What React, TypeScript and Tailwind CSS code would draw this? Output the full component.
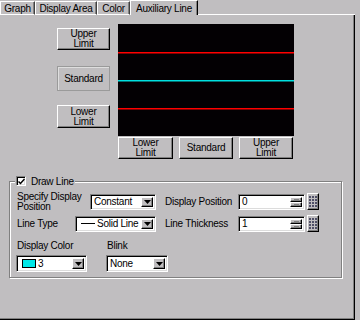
import React from "react";

const raised =
  "bg-[#c0bec0] border border-t-white border-l-white border-r-black border-b-black shadow-[inset_-1px_-1px_0_#808080]";
const sunken =
  "bg-white border border-t-[#808080] border-l-[#808080] border-r-white border-b-white shadow-[inset_1px_1px_0_#000,inset_-1px_-1px_0_#dcdcdc]";

function Btn({ w, h, children }: { w: string; h: string; children: React.ReactNode }) {
  return (
    <div className={`${raised} ${w} ${h} flex flex-col items-center justify-center leading-[10px] text-center`}>
      {children}
    </div>
  );
}

function Arrow() {
  return (
    <div className={`${raised} w-[12px] h-full flex items-center justify-center`}>
      <svg width="7" height="4" viewBox="0 0 7 4">
        <path d="M0 0h7L3.5 4z" fill="#000" />
      </svg>
    </div>
  );
}

function Select({ w, h, children }: { w: string; h: string; children: React.ReactNode }) {
  return (
    <div className={`${sunken} ${w} ${h} flex items-stretch p-[2px]`}>
      <div className="flex-1 flex items-center pl-[1px] overflow-hidden whitespace-nowrap">{children}</div>
      <Arrow />
    </div>
  );
}

function Spin() {
  return (
    <div className={`${raised} flex-1 flex items-center justify-center`}>
      <div className="w-[5px] h-[1px] bg-[#808080]" />
    </div>
  );
}

function NumInput({ value }: { value: string }) {
  return (
    <div className="flex items-center">
      <div className={`${sunken} w-[67px] h-[16px] flex items-stretch p-[2px]`}>
        <div className="flex-1 flex items-center pl-[1px]">{value}</div>
        <div className="w-[12px] flex flex-col">
          <Spin />
          <Spin />
        </div>
      </div>
      <div className={`${raised} ml-[2px] w-[12px] h-[17px] flex items-center justify-center`}>
        <svg width="8" height="11" viewBox="0 0 8 11">
          {[0, 1, 2, 3].map((r) =>
            [0, 1, 2].map((c) => (
              <rect key={`${r}-${c}`} x={c * 3} y={r * 3} width="2" height="2" fill="#505068" />
            ))
          )}
        </svg>
      </div>
    </div>
  );
}

function Tab({ w, label }: { w: string; label: string }) {
  return (
    <div
      className={`${w} h-[14px] flex items-center justify-center border border-t-white border-l-white border-b-white border-r-[#404040] shadow-[inset_-1px_0_0_#808080]`}
    >
      {label}
    </div>
  );
}

export default function App() {
  return (
    <div className="w-[360px] h-[320px] bg-[#c0bec0] text-black text-[10px] tracking-[-0.25px] font-['Liberation_Sans',Arial,sans-serif] overflow-hidden flex flex-col">
      {/* tabs */}
      <div className="w-[355px] h-[15px] shrink-0 flex items-end">
        <Tab w="w-[35px]" label="Graph" />
        <Tab w="w-[62px]" label="Display Area" />
        <Tab w="w-[33px]" label="Color" />
        <div className="w-[68px] h-[15px] flex items-center justify-center border-t border-l border-t-white border-l-white border-r border-r-black shadow-[inset_-1px_0_0_#808080]">
          Auxiliary Line
        </div>
        <div className="flex-1 h-[14px] border-b border-b-white" />
      </div>

      {/* panel */}
      <div className="w-[355px] flex-1 border-r border-b border-black shadow-[inset_-1px_-1px_0_#808080] flex flex-col">
        <div className="mt-[9px] ml-[57px] flex">
          <div className="w-[53px] flex flex-col">
            <div className="mt-[4px]">
              <Btn w="w-[53px]" h="h-[22px]">
                <span>Upper</span>
                <span>Limit</span>
              </Btn>
            </div>
            <div className="mt-[16px] w-[53px] h-[25px] border border-[#9a9a9a] shadow-[inset_1px_1px_0_#dedede] flex items-center justify-center">
              Standard
            </div>
            <div className="mt-[14px]">
              <Btn w="w-[53px]" h="h-[23px]">
                <span>Lower</span>
                <span>Limit</span>
              </Btn>
            </div>
          </div>
          <div className="ml-[8px] flex flex-col">
            <svg width="176" height="112" viewBox="0 0 176 112" className="block">
              <rect width="176" height="112" fill="#030003" />
              <rect y="28" width="176" height="1.5" fill="#ff0000" />
              <rect y="56" width="176" height="1.5" fill="#00e0e0" />
              <rect y="84" width="176" height="1.5" fill="#ff0000" />
            </svg>
            <div className="mt-[1px] flex gap-[6px]">
              <Btn w="w-[55px]" h="h-[22px]">
                <span>Lower</span>
                <span>Limit</span>
              </Btn>
              <Btn w="w-[54px]" h="h-[22px]">
                <span>Standard</span>
              </Btn>
              <Btn w="w-[54px]" h="h-[22px]">
                <span>Upper</span>
                <span>Limit</span>
              </Btn>
            </div>
          </div>
        </div>

        {/* group box */}
        <div className="relative mt-[22px] ml-[9px] w-[333px] h-[97px] border border-[#808080] shadow-[inset_1px_1px_0_#fff,1px_1px_0_#fff] pl-[7px] pt-[11px] flex flex-col">
          <div className="absolute -top-[7px] left-[5px] px-[1px] bg-[#c0bec0] flex items-center gap-[5px] h-[12px]">
            <div className={`${sunken} w-[10px] h-[10px] flex items-center justify-center`}>
              <svg width="7" height="7" viewBox="0 0 7 7">
                <path d="M0.5 3.5l2 2 4-4.5" stroke="#000" strokeWidth="1.5" fill="none" />
              </svg>
            </div>
            <span>Draw Line</span>
          </div>

          <div className="flex items-center h-[17px]">
            <div className="w-[73px] leading-[10px]">
              Specify Display
              <br />
              Position
            </div>
            <Select w="w-[66px]" h="h-[16px]">Constant</Select>
            <div className="ml-[9px] w-[73px]">Display Position</div>
            <NumInput value="0" />
          </div>

          <div className="mt-[5px] flex items-center h-[17px]">
            <div className="w-[58px]">Line Type</div>
            <Select w="w-[81px]" h="h-[16px]">
              <span className="inline-block w-[14px] h-[1px] bg-black ml-[2px] mr-[2px]" />
              Solid Line
            </Select>
            <div className="ml-[9px] w-[73px]">Line Thickness</div>
            <NumInput value="1" />
          </div>

          <div className="mt-[7px] flex h-[13px] items-center">
            <div className="w-[90px]">Display Color</div>
            <div>Blink</div>
          </div>

          <div className="mt-[3px] -ml-[1px] flex gap-[19px]">
            <Select w="w-[71px]" h="h-[17px]">
              <span className="inline-block w-[14px] h-[9px] bg-[#00e8e8] border border-black ml-[2px] mr-[2px]" />
              3
            </Select>
            <Select w="w-[62px]" h="h-[17px]">None</Select>
          </div>
        </div>
      </div>
    </div>
  );
}
